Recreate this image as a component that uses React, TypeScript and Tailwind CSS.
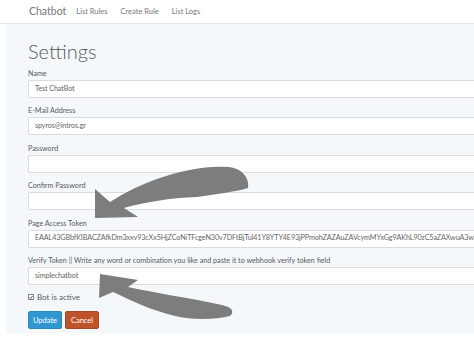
import React from 'react';

const fields = [
    { label: 'Name', value: 'Test ChatBot' },
    { label: 'E-Mail Address', value: 'spyros@intros.gr' },
    { label: 'Password', value: '' },
    { label: 'Confirm Password', value: '' },
    {
        label: 'Page Access Token',
        value: 'EAAL43GBbfKIBACZAfkDm3xxv93cXx5HjZCoNiTFcgeN30v7DFtBjTul41Y8YTY4E93jPPmohZAZAuZAVcymMYxGg9AKhL90zC5aZAXwuA3wmnr',
    },
    {
        label: 'Verify Token || Write any word or combination you like and paste it to webhook verify token field',
        value: 'simplechatbot',
    },
];

const Arrows = () => (
    <svg
        className="absolute inset-0 pointer-events-none"
        width={474}
        height={338}
        viewBox="0 0 474 338"
    >
        <path
            d="M95,189 L110,202 C140,182 190,164 228,167 C242,168 250,178 248,188 C235,192 215,194 197,197 C170,198 145,202 124,208 L138,217 L95,218 Z"
            fill="#7d7d7d"
        />
        <path
            d="M100,274 L138,280 L128,287 C155,293 190,298 222,305 C232,307 235,312 230,316 C215,320 190,320 175,316 C150,310 130,300 113,292 L99,298 Z"
            fill="#7d7d7d"
        />
    </svg>
);

export default function App() {
    return (
        <div className="relative w-[474px] h-[338px] overflow-hidden bg-white text-[#636b6f] font-['Lato',sans-serif]">
            <nav className="h-[24px] bg-white border-b border-[#e6eaed] flex items-center pl-[29px]">
                <span className="text-[10.5px] text-[#777] mr-[10px]">Chatbot</span>
                <div className="flex gap-[13px] text-[7.5px] text-[#777]">
                    <span>List Rules</span>
                    <span>Create Rule</span>
                    <span>List Logs</span>
                </div>
            </nav>

            <main className="ml-[6px] h-[309px] bg-[#f5f8fa] pl-[22px] pt-[17px] overflow-hidden">
                <h1 className="text-[20px] font-light leading-none text-[#555b5f] mb-[8px]">Settings</h1>

                {fields.map((f) => (
                    <div key={f.label} className="mb-[8.4px]">
                        <label className="block h-[10px] leading-[10px] text-[7.2px] text-[#555b5f] whitespace-nowrap mb-[1px]">
                            {f.label}
                        </label>
                        <div className="h-[18px] bg-white border border-[#d8dcdf] rounded-[2px] pl-[6px] flex items-center text-[7.2px] text-[#666] whitespace-nowrap overflow-hidden w-[452px] shrink-0 tracking-[-0.1px]">
                            {f.value}
                        </div>
                    </div>
                ))}

                <div className="flex items-center gap-[3px] h-[12px] -mt-[2px] mb-[8px] text-[8px] text-[#555b5f]">
                    <span className="w-[6px] h-[6px] border border-[#888] bg-white flex items-center justify-center">
                        <svg width="5" height="5" viewBox="0 0 10 10">
                            <path d="M1,5 L4,8 L9,1" stroke="#333" strokeWidth="2" fill="none" />
                        </svg>
                    </span>
                    <span>Bot is active</span>
                </div>

                <div className="flex gap-[3px]">
                    <button className="w-[34px] h-[18px] rounded-[2px] bg-[#3097d1] border border-[#2a88bd] text-white text-[7.5px]">
                        Update
                    </button>
                    <button className="w-[34px] h-[18px] rounded-[2px] bg-[#bf5329] border border-[#aa4a24] text-white text-[7.5px]">
                        Cancel
                    </button>
                </div>
            </main>

            <Arrows />
        </div>
    );
}
